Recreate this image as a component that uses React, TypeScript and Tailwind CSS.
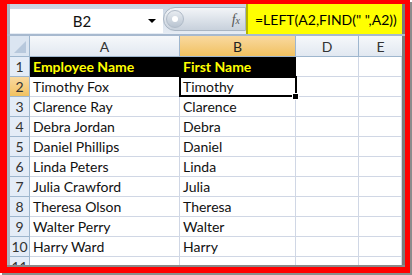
import React from "react";

const rows = [
  ["Timothy Fox", "Timothy"],
  ["Clarence Ray", "Clarence"],
  ["Debra Jordan", "Debra"],
  ["Daniel Phillips", "Daniel"],
  ["Linda Peters", "Linda"],
  ["Julia Crawford", "Julia"],
  ["Theresa Olson", "Theresa"],
  ["Walter Perry", "Walter"],
  ["Harry Ward", "Harry"],
];

const font = { fontFamily: "Lato, 'Liberation Sans', sans-serif" };

function RowHead({ n, active = false }: { n: string; active?: boolean }) {
  return (
    <div
      className={`h-[20px] w-[20px] shrink-0 flex items-center justify-center text-[14px] text-[#333] border-r border-b border-[#9eb6ce] ${
        active ? "bg-gradient-to-b from-[#f9d99f] to-[#f1c15f]" : "bg-[#e4ecf7]"
      }`}
    >
      {n}
    </div>
  );
}

function Cell({ w, children }: { w: string; children?: React.ReactNode }) {
  return (
    <div className={`${w} h-full shrink-0 flex items-center pl-[3px] border-r border-b border-[#d0d7e5] text-[14px] text-[#111] whitespace-nowrap`}>
      {children}
    </div>
  );
}

export default function App() {
  return (
    <div className="w-[412px] h-[275px] bg-white overflow-hidden" style={font}>
      <div className="w-[410px] h-[273px] border-t-4 border-l-[7px] border-r-[5px] border-b-[6px] border-[#ff0000] shadow-[2px_2px_0_#8c8c8c] flex flex-col">
        {/* formula bar */}
        <div className="h-[32px] shrink-0 flex bg-gradient-to-b from-[#c9d4e2] to-[#e6ecf4] border-b-2 border-[#a7b9cf]">
          <div className="w-[3px] bg-[#aab4c0]" />
          <div className="w-[150px] mt-[5px] mb-[1px] bg-white flex items-center">
            <span className="flex-1 text-center text-[15px] text-[#111] pl-[6px]">B2</span>
            <span className="w-0 h-0 border-l-[4px] border-r-[4px] border-t-[4px] border-l-transparent border-r-transparent border-t-black mr-[4px]" />
          </div>
          <div className="w-[3px] mt-[5px] mb-[1px] bg-white" />
          <div className="w-[83px] my-[3px] rounded-l-full bg-gradient-to-b from-[#f3f5f8] via-[#dde3ea] to-[#c8d1dc] border border-[#a9b5c3] flex items-center">
            <span className="ml-[2px] w-[18px] h-[18px] rounded-full bg-gradient-to-b from-[#e8ecf1] to-[#b9c4d1] border border-[#b0bbc8] flex items-center justify-center">
              <span className="w-[6px] h-[6px] rounded-full bg-white" />
            </span>
            <span className="ml-auto mr-[5px] text-[14px] italic text-[#555]" style={{ fontFamily: "'Liberation Serif', serif" }}>
              f<span className="text-[10px]">x</span>
            </span>
          </div>
          <div className="flex-1 bg-[#ffff00] border-l-2 border-[#b3b300] flex items-center pl-[7px] text-[14px] text-black whitespace-nowrap overflow-hidden">
            =LEFT(A2,FIND(" ",A2))
          </div>
          <div className="w-[3px] bg-[#7a7a7a]" />
        </div>

        <div className="flex-1 flex min-h-0">
          <div className="w-[3px] bg-[#aab4c0]" />
          <div className="flex-1 flex flex-col bg-white overflow-hidden">
            {/* column headers */}
            <div className="h-[21px] shrink-0 flex text-[14px] text-[#333]">
              <div className="w-[20px] bg-[#dbe5f1] border-r border-b border-[#9eb6ce] flex items-end justify-end p-[3px]">
                <span className="w-0 h-0" style={{ borderBottom: "12px solid #b7c8dc", borderLeft: "12px solid transparent" }} />
              </div>
              <div className="w-[150px] flex items-center justify-center bg-gradient-to-b from-[#f6f8fb] to-[#e1e8f1] border-r border-b border-[#9eb6ce]">A</div>
              <div className="w-[116px] flex items-center justify-center bg-gradient-to-b from-[#f9d99f] to-[#f1c15f] border-r border-b border-[#9eb6ce] text-[#222]">B</div>
              <div className="w-[63px] flex items-center justify-center bg-gradient-to-b from-[#f6f8fb] to-[#e1e8f1] border-r border-b border-[#9eb6ce]">D</div>
              <div className="flex-1 flex items-center justify-center bg-gradient-to-b from-[#f6f8fb] to-[#e1e8f1] border-b border-[#9eb6ce]">E</div>
            </div>

            {/* row 1 */}
            <div className="h-[20px] shrink-0 flex">
              <RowHead n="1" />
              <div className="w-[266px] h-full flex bg-black text-[#ffff00] font-bold text-[14px] border-b border-black">
                <div className="w-[150px] flex items-center pl-[3px]">Employee Name</div>
                <div className="w-[116px] flex items-center pl-[3px]">First Name</div>
              </div>
              <Cell w="w-[63px]" />
              <Cell w="flex-1" />
            </div>

            {rows.map(([a, b], i) => (
              <div key={a} className="h-[20px] shrink-0 flex">
                <RowHead n={String(i + 2)} active={i === 0} />
                <Cell w="w-[150px]">{a}</Cell>
                {i === 0 ? (
                  <div className="w-[116px] h-full shrink-0 relative">
                    <div className="absolute -left-[1px] -top-[1px] w-[118px] h-[21px] border-2 border-black flex items-center pl-[2px] text-[14px] text-[#111]">
                      {b}
                    </div>
                    <span className="absolute -right-[3px] -bottom-[3px] w-[5px] h-[5px] bg-black border border-white box-content" />
                  </div>
                ) : (
                  <Cell w="w-[116px]">{b}</Cell>
                )}
                <Cell w="w-[63px]" />
                <Cell w="flex-1" />
              </div>
            ))}

            <div className="h-[20px] shrink-0 flex">
              <RowHead n="11" />
              <Cell w="w-[150px]" />
              <Cell w="w-[116px]" />
              <Cell w="w-[63px]" />
              <Cell w="flex-1" />
            </div>
          </div>
          <div className="w-[3px] bg-[#7a7a7a]" />
        </div>
        <div className="h-[2px] shrink-0 bg-[#8a8a8a]" />
      </div>
    </div>
  );
}
